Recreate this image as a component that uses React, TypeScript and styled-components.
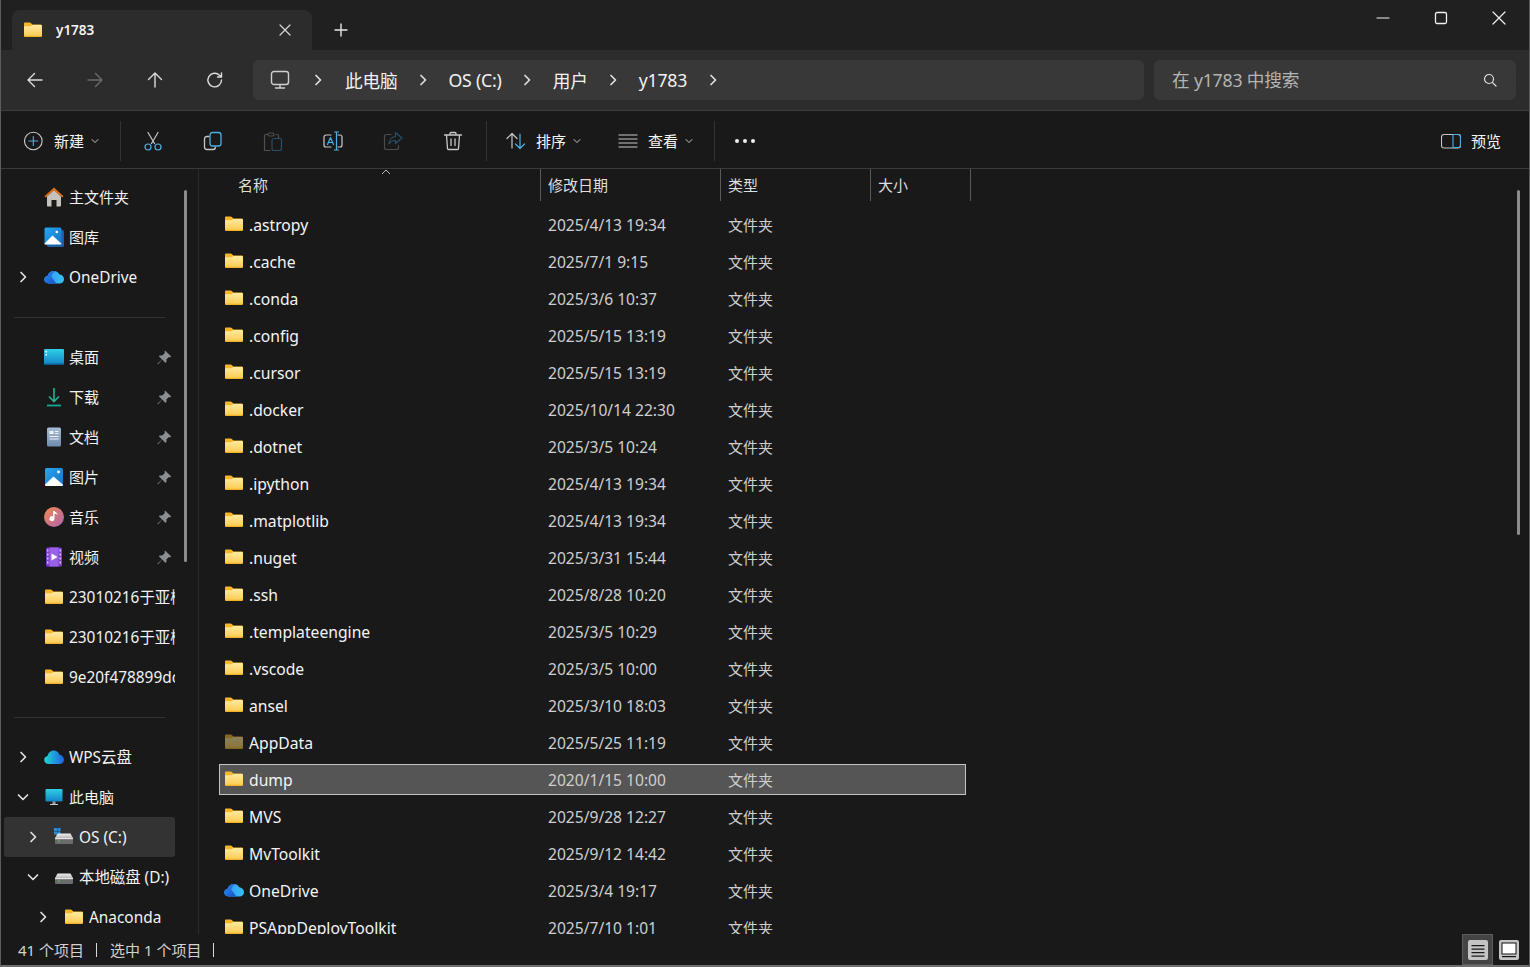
import React from "react";
import styled, { createGlobalStyle } from "styled-components";

const Global = createGlobalStyle`
  html, body { margin: 0; padding: 0; background: #191919; overflow: hidden; }
  * { box-sizing: border-box; }
`;

const FONT = `"Noto Sans", "Noto Sans CJK SC", sans-serif`;

const Win = styled.div`
  width: 1530px; height: 967px; display: flex; flex-direction: column;
  border-left: 1px solid #5c5c5c; border-right: 1px solid #5c5c5c; border-bottom: 2px solid #6e6e6e;
  font-family: ${FONT}; color: #fff; background: #191919; overflow: hidden;
`;
const TitleBar = styled.div`
  height: 50px; flex: none; background: #202020; display: flex; padding: 10px 0 0 11px;
`;
const Tab = styled.div`
  width: 300px; height: 40px; background: #2c2c2c; border-radius: 8px 8px 0 0;
  display: flex; align-items: center; padding: 0 21px 0 11px;
`;
const TabTitle = styled.span`
  font-size: 13.5px; font-weight: 600; margin-left: 13px; flex: 1; color: #f4f4f4;
`;
const NewTab = styled.div`
  width: 58px; height: 40px; display: flex; align-items: center; justify-content: center;
`;
const WinCtrls = styled.div`
  margin: -10px 1px 0 auto; display: flex; height: 36px;
`;
const WinBtn = styled.div<{ $w: number }>`
  width: ${p => p.$w}px; height: 36px; display: flex; align-items: center; justify-content: center;
`;
const NavBar = styled.div`
  height: 61px; flex: none; background: #2c2c2c; border-bottom: 1px solid #3c3c3c;
  display: flex; align-items: center; padding: 0 13px 1px 4px;
`;
const NavBtn = styled.div<{ $off?: boolean }>`
  width: 60px; height: 40px; display: flex; align-items: center; justify-content: center;
  color: ${p => (p.$off ? "#6a6a6a" : "#dcdcdc")};
`;
const Address = styled.div`
  flex: 1; height: 40px; margin-left: 8px; background: #383838; border-radius: 6px;
  display: flex; align-items: center; padding-left: 17px; gap: 19.5px;
  & > svg:first-child { margin-right: 2.5px; }
`;
const Crumb = styled.span`
  font-size: 17.7px; color: #f2f2f2; letter-spacing: -0.2px; white-space: nowrap;
  &:first-of-type { margin-left: 1.5px; }
`;
const Search = styled.div`
  width: 362px; height: 40px; margin-left: 10px; background: #383838; border-radius: 6px;
  display: flex; align-items: center; justify-content: space-between; padding: 0 19px 0 18px;
  font-size: 17.7px; color: #b4b4b4; letter-spacing: -0.2px;
`;
const SearchText = styled.span`
  position: relative; top: -1px;
`;
const Toolbar = styled.div`
  height: 58px; flex: none; background: #191919; border-bottom: 1px solid #3a3a3a;
  display: flex; align-items: center; padding: 3px 28px 0 11px;
`;
const TextBtn = styled.div<{ $w: number }>`
  width: ${p => p.$w}px; height: 40px; display: flex; align-items: center; padding-left: ${p => (p.$w > 110 ? 17 : 12)}px;
  font-size: 15px; color: #f6f6f6;
`;
const BtnLabel = styled.span`
  margin: 0 7px 0 10px; white-space: nowrap; position: relative; top: -1px;
`;
const Sep = styled.div<{ $l?: number }>`
  width: 1px; height: 40px; background: #333; margin: 0 2px 0 ${p => p.$l ?? 2}px;
`;
const IconBtn = styled.div`
  width: 60px; height: 40px; display: flex; align-items: center; justify-content: center;
`;
const DotsBtn = styled(IconBtn)`
  width: 56px;
`;
const Preview = styled.div`
  margin-left: auto; display: flex; align-items: center; gap: 10px; font-size: 15px; color: #f6f6f6;
`;
const PreviewLabel = styled.span`
  position: relative; top: -1px;
`;
const Body = styled.div`
  flex: 1; min-height: 0; display: flex;
`;
const Side = styled.div`
  width: 198px; flex: none; position: relative; overflow: hidden; padding-top: 8px;
  border-right: 1px solid #2a2a2a; padding-right: 23px; padding-left: 3px;
`;
const SideRow = styled.div<{ $level: number; $sel?: boolean }>`
  height: 40px; display: flex; align-items: center; border-radius: 3px;
  background: ${p => (p.$sel ? "#333333" : "transparent")};
  padding-left: ${p => p.$level * 10 + 11}px; position: relative;
`;
const Chev = styled.div`
  width: 16px; height: 16px; display: flex; align-items: center; justify-content: center; flex: none; color: #d0d0d0;
`;
const SideIcon = styled.div`
  width: 20px; height: 20px; margin-left: 13px; flex: none; display: flex; align-items: center; justify-content: center;
`;
const SideText = styled.span<{ $kind: "cjk" | "mixed" | "latin" }>`
  margin-left: 5px; font-size: ${p => (p.$kind === "cjk" ? 15 : 15.4)}px; color: #f2f2f2; white-space: nowrap; overflow: hidden;
  flex: 1; min-width: 0; padding-bottom: ${p => (p.$kind === "latin" ? 0 : 2)}px;
`;
const PinWrap = styled.div`
  position: absolute; right: 3px; top: 12px; width: 16px; height: 16px;
`;
const Divider = styled.div`
  height: 40px; display: flex; align-items: center; padding: 0 10px 0 10px;
  &::after { content: ""; height: 1px; flex: 1; background: #333; }
`;
const Thumb = styled.div<{ $h: number; $top: number; $right: number; $w: number }>`
  position: absolute; right: ${p => p.$right}px; top: ${p => p.$top}px; width: ${p => p.$w}px; height: ${p => p.$h}px;
  background: #8c8c8c; border-radius: 2px;
`;
const Main = styled.div`
  flex: 1; min-width: 0; position: relative; overflow: hidden; display: flex; flex-direction: column;
`;
const Header = styled.div`
  height: 32px; flex: none; display: flex; padding-left: 21px;
`;
const HeadCell = styled.div<{ $w: number; $first?: boolean }>`
  width: ${p => p.$w}px; font-size: 15px; color: #dedede; position: relative;
  display: flex; align-items: center;
  padding-left: ${p => (p.$first ? 18 : 7)}px; padding-bottom: 2px;
  border-right: 1px solid #5a5a5a;
`;
const SortMark = styled.svg`
  position: absolute; left: 161px; top: 0;
`;
const List = styled.div`
  flex: 1; min-height: 0; overflow: hidden; padding: 8px 0 0 20px;
`;
const FileRow = styled.div<{ $sel?: boolean }>`
  width: 747px; height: 31px; margin-bottom: 6px; display: flex; align-items: center;
  border: 1px solid ${p => (p.$sel ? "#c4c4c4" : "transparent")};
  background: ${p => (p.$sel ? "#555555" : "transparent")};
`;
const NameCell = styled.div`
  width: 320px; padding-left: 4px; display: flex; align-items: center; font-size: 15.7px; color: #f4f4f4; flex: none;
  & > svg { margin-top: -2px; }
`;
const NameText = styled.span`
  margin-left: 5px; white-space: nowrap;
`;
const DateCell = styled.div`
  width: 180px; padding-left: 8px; font-size: 15.6px; color: #cfcfcf; flex: none; white-space: nowrap;
`;
const TypeCell = styled.div`
  padding-left: 8px; font-size: 15px; color: #cfcfcf; white-space: nowrap;
`;
const Status = styled.div`
  height: 31px; flex: none; display: flex; align-items: center; padding-left: 17px;
  font-size: 15px; color: #d2d2d2; background: #191919;
`;
const StatusSep = styled.span`
  width: 1px; height: 14px; background: #d8d8d8; margin: 0 13px 0 12px;
`;
const ViewGroup = styled.div`
  margin-left: auto; display: flex; height: 31px; padding-right: 5px; align-items: center;
`;
const ViewBtn = styled.div<{ $on?: boolean }>`
  width: 31px; height: 31px; display: flex; align-items: center; justify-content: center;
  background: ${p => (p.$on ? "#444" : "transparent")};
  border: 1px solid ${p => (p.$on ? "#5c5c5c" : "transparent")};
`;
const HiddenDefs = styled.svg`
  position: absolute; width: 0; height: 0;
`;

const Defs = () => (
  <HiddenDefs aria-hidden="true">
    <defs>
      <linearGradient id="fold" x1="0" y1="0" x2="0" y2="1"><stop offset="0" stopColor="#ffeaa0" /><stop offset="1" stopColor="#fcca50" /></linearGradient>
      <linearGradient id="cloud" x1="0" y1="0" x2="1" y2="1"><stop offset="0" stopColor="#2a8cf0" /><stop offset="1" stopColor="#1454c8" /></linearGradient>
      <linearGradient id="cloud2" x1="0" y1="0" x2="1" y2="0"><stop offset="0" stopColor="#3d8ff5" /><stop offset="1" stopColor="#32c3f5" /></linearGradient>
      <linearGradient id="wps" x1="0" y1="0" x2="1" y2="0"><stop offset="0" stopColor="#22d6d0" /><stop offset="1" stopColor="#1d63e6" /></linearGradient>
      <linearGradient id="pic" x1="0" y1="0" x2="1" y2="1"><stop offset="0" stopColor="#29a6ee" /><stop offset="1" stopColor="#1272c8" /></linearGradient>
      <linearGradient id="desk" x1="0" y1="0" x2="0" y2="1"><stop offset="0" stopColor="#30d0e6" /><stop offset="1" stopColor="#1384c8" /></linearGradient>
      <linearGradient id="music" x1="0" y1="0" x2="1" y2="1"><stop offset="0" stopColor="#f08a4a" /><stop offset="1" stopColor="#b062b4" /></linearGradient>
      <linearGradient id="doc" x1="0" y1="0" x2="0" y2="1"><stop offset="0" stopColor="#a8bdd6" /><stop offset="1" stopColor="#6f8cab" /></linearGradient>
      <linearGradient id="drive" x1="0" y1="0" x2="0" y2="1"><stop offset="0" stopColor="#f0f0f0" /><stop offset="1" stopColor="#b8b8b8" /></linearGradient>
    </defs>
  </HiddenDefs>
);

const Folder = ({ dim }: { dim?: boolean }) => (
  <svg width="20" height="16" viewBox="0 0 20 16" opacity={dim ? 0.5 : 1}>
    <path d="M1 1.500C1 .9 1.500.5 2 .5h4.600c.5 0 .9.2 1.200.5L9.400 2.500H17.600c.8 0 1.400.6 1.400 1.400V6H1z" fill="#f6b62a" />
    <path d="M1 13.500V5c0-.4.3-.8.800-.8h5.400c.4 0 .8-.1 1.100-.4L9.600 3h8c.8 0 1.400.6 1.400 1.400v9.100c0 .8-.6 1.400-1.400 1.400H2.400C1.600 14.900 1 14.300 1 13.500z" fill="url(#fold)" />
    <path d="M1 13.800h18c0 .7-.6 1.200-1.400 1.200H2.400c-.8 0-1.400-.5-1.400-1.200z" fill="#f0b32a" />
  </svg>
);
const OneDriveIcon = () => (
  <svg width="20" height="14" viewBox="0 0 20 14">
    <path d="M4.500 13.500C2 13.500.2 11.800.2 9.600c0-2 1.500-3.600 3.400-3.800C4.500 3 7 1 9.800 1c2.300 0 4.300 1.200 5.400 3.200C17.800 4.500 20 6.500 20 9.200c0 2.400-1.900 4.300-4.300 4.300z" fill="url(#cloud2)" />
    <path d="M4.500 13.500C2 13.500.2 11.800.2 9.600c0-2 1.500-3.600 3.400-3.800C4.500 3 7 1 9.800 1l1.500.3c-2 1-3.500 3-4 5.200l5 7z" fill="url(#cloud)" />
  </svg>
);
const WpsIcon = () => (
  <svg width="20" height="16" viewBox="0 0 20 16">
    <path d="M4.500 15C2 15 .2 13.200.2 11c0-2 1.400-3.600 3.300-3.900C4 4 6.500 1.500 9.800 1.500c2.700 0 5 1.800 5.700 4.300C18 6.200 20 8.200 20 10.700c0 2.400-1.900 4.300-4.300 4.300z" fill="url(#wps)" />
  </svg>
);
const HomeIcon = () => (
  <svg width="20" height="20" viewBox="0 0 20 20">
    <path d="M3 9.500 10 3l7 6.500V18.500c0 .6-.4 1-1 1h-3.500v-6.500h-5v6.500H4c-.6 0-1-.4-1-1z" fill="#c6c2bd" />
    <path d="M10 .5 0.500 9.300l1.200 1.300L10 3l8.300 7.600 1.200-1.300z" fill="#e8720f" />
  </svg>
);
const GalleryIcon = () => (
  <svg width="20" height="20" viewBox="0 0 20 20">
    <rect x="3" y="3" width="17" height="17" rx="1.500" fill="#1b5fa8" />
    <rect x="0.500" y="0.500" width="17" height="17" rx="1.500" fill="url(#pic)" />
    <path d="M0.500 16.500 8.500 8.500l9 8.200v.3c0 .3-.2.500-.5.500H1c-.3 0-.5-.2-.5-.5z" fill="#fff" />
    <circle cx="12.800" cy="5" r="1.300" fill="#fff" />
  </svg>
);
const PicIcon = () => (
  <svg width="20" height="20" viewBox="0 0 20 20">
    <rect x="1" y="1" width="18" height="18" rx="1.500" fill="url(#pic)" />
    <path d="M1 17.500 9.500 9.500l9.500 8.200c0 .8-.4 1.300-1.200 1.300H2.200C1.400 19 1 18.400 1 17.500z" fill="#fff" />
    <circle cx="14.500" cy="5" r="1.400" fill="#fff" />
  </svg>
);
const DesktopIcon = () => (
  <svg width="20" height="16" viewBox="0 0 20 16">
    <rect x="0" y="0" width="20" height="15.500" rx="1" fill="url(#desk)" />
    <rect x="1.500" y="2" width="1.500" height="1.500" fill="#fff" />
    <rect x="1.500" y="5" width="1.500" height="1.500" fill="#fff" />
    <rect x="0" y="14.500" width="20" height="1.200" fill="#0c5f9c" />
  </svg>
);
const DownloadIcon = () => (
  <svg width="20" height="20" viewBox="0 0 20 20" fill="none">
    <path d="M10 1v13M5 9.500l5 5 5-5" stroke="#2bb08f" strokeWidth="1.600" />
    <path d="M3 18.500h14" stroke="#14a89a" strokeWidth="1.800" />
  </svg>
);
const DocIcon = () => (
  <svg width="20" height="20" viewBox="0 0 20 20">
    <rect x="3" y="0.500" width="14" height="19" rx="1.500" fill="url(#doc)" />
    <path d="M5.500 4h4v3h-4zM11 4h3.500v1H11zM11 6h3.500v1H11zM5.500 9h9v1h-9zM5.500 11.500h9v1h-9z" fill="#eef3f8" />
  </svg>
);
const MusicIcon = () => (
  <svg width="20" height="20" viewBox="0 0 20 20">
    <circle cx="10" cy="10" r="10" fill="url(#music)" />
    <path d="M10.500 4v7.600a2.500 2.500 0 1 1-1.400-2.200V4z M10.500 4c1 1.800 3 1.800 3.300 4-1.200-1-2.300-1.200-3.300-1.200z" fill="#fff" />
  </svg>
);
const VideoIcon = () => (
  <svg width="20" height="20" viewBox="0 0 20 20">
    <rect x="2" y="0.500" width="16" height="19" rx="1.500" fill="#7d3ed0" />
    <rect x="5.500" y="0.500" width="9" height="19" fill="#9a62e6" />
    <path d="M7.500 6.500v7l6-3.500z" fill="#fff" />
    <path d="M3 2.500h1.500v2H3zM3 6.500h1.500v2H3zM3 10.500h1.500v2H3zM3 14.500h1.500v2H3zM15.500 2.500H17v2h-1.500zM15.500 6.500H17v2h-1.500zM15.500 10.500H17v2h-1.500zM15.500 14.500H17v2h-1.500z" fill="#d8c2f6" />
  </svg>
);
const PcIcon = () => (
  <svg width="20" height="20" viewBox="0 0 20 20">
    <rect x="1.500" y="2" width="17" height="12.500" rx="1" fill="url(#desk)" />
    <rect x="8.500" y="14.500" width="3" height="2.500" fill="#9aa3ab" />
    <rect x="6" y="17" width="8" height="1" fill="#c4cad0" />
  </svg>
);
const DriveIcon = ({ win }: { win?: boolean }) => (
  <svg width="20" height="20" viewBox="0 0 20 20">
    {win && <path d="M0 1h3v3H0zM3.500 1h3v3h-3zM0 4.500h3v3H0zM3.500 4.500h3v3h-3z" fill="#1e90e6" />}
    <path d="M3.500 6.500h13L19 11H1z" fill="url(#drive)" />
    <rect x="1" y="11" width="18" height="6" rx="1" fill="#6b6b6b" />
    <rect x="1" y="11" width="18" height="1.200" fill="#e4e4e4" />
    <rect x="4" y="13.500" width="1.500" height="1.500" fill="#34d058" />
  </svg>
);
const Pin = () => (
  <svg width="16" height="16" viewBox="0 0 16 16" fill="#8a8f94">
    <path d="M9.800 1.200 15 6.300c.3.300.1.800-.3.800-.6.100-1.200 0-1.700-.2l-2.700 2.700c.3 1 .3 2.100-.2 3-.2.300-.6.300-.8.100L6.200 9.600 2 14.300 1.400 13.700l4.600-4.200L3.100 6.600c-.2-.2-.2-.6.100-.8.900-.5 2-.5 3-.2l2.700-2.700c-.2-.5-.3-1.100-.2-1.700 0-.4.500-.6.800-.2z" />
  </svg>
);

const SvgLine = ({ children, w = 20, h = 20, vb, sw = 1.4, c = "currentColor" }: { children: React.ReactNode; w?: number; h?: number; vb?: string; sw?: number; c?: string }) => (
  <svg width={w} height={h} viewBox={vb ?? `0 0 ${w} ${h}`} fill="none" stroke={c} strokeWidth={sw} strokeLinecap="round" strokeLinejoin="round">{children}</svg>
);
const ChevR = ({ size = 12, c = "#e0e0e0" }: { size?: number; c?: string }) => (
  <SvgLine w={size} h={size} vb="0 0 12 12" sw={1.7} c={c}><path d="M4 1.500 8.500 6 4 10.500" /></SvgLine>
);
const ChevD = ({ c = "#e0e0e0" }: { c?: string }) => (
  <SvgLine w={12} h={12} sw={1.7} c={c}><path d="M1.500 4 6 8.500 10.500 4" /></SvgLine>
);
const SmallChev = () => (
  <SvgLine w={8} h={8} sw={1} c="#c8c8c8"><path d="M1 2.500 4 5.500 7 2.500" /></SvgLine>
);
const BLUE = "#4cb0e8";
const GR = "#c8c8c8";

const sideKind = (t: string): "cjk" | "mixed" | "latin" =>
  /^[\x00-\x7f]+$/.test(t) ? "latin" : /^[^\x00-\x7f]+$/.test(t) ? "cjk" : "mixed";

const sideItems: Array<
  | { d: true }
  | { t: string; level: number; icon: React.ReactNode; chev?: "r" | "d"; pin?: boolean; sel?: boolean }
> = [
  { t: "主文件夹", level: 0, icon: <HomeIcon /> },
  { t: "图库", level: 0, icon: <GalleryIcon /> },
  { t: "OneDrive", level: 0, icon: <OneDriveIcon />, chev: "r" },
  { d: true },
  { t: "桌面", level: 0, icon: <DesktopIcon />, pin: true },
  { t: "下载", level: 0, icon: <DownloadIcon />, pin: true },
  { t: "文档", level: 0, icon: <DocIcon />, pin: true },
  { t: "图片", level: 0, icon: <PicIcon />, pin: true },
  { t: "音乐", level: 0, icon: <MusicIcon />, pin: true },
  { t: "视频", level: 0, icon: <VideoIcon />, pin: true },
  { t: "23010216于亚楠", level: 0, icon: <Folder /> },
  { t: "23010216于亚楠", level: 0, icon: <Folder /> },
  { t: "9e20f478899dc29eb19741386f9343c8", level: 0, icon: <Folder /> },
  { d: true },
  { t: "WPS云盘", level: 0, icon: <WpsIcon />, chev: "r" },
  { t: "此电脑", level: 0, icon: <PcIcon />, chev: "d" },
  { t: "OS (C:)", level: 1, icon: <DriveIcon win />, chev: "r", sel: true },
  { t: "本地磁盘 (D:)", level: 1, icon: <DriveIcon />, chev: "d" },
  { t: "Anaconda", level: 2, icon: <Folder />, chev: "r" },
];

const files: Array<[string, string, ("dim" | "od")?]> = [
  [".astropy", "2025/4/13 19:34"],
  [".cache", "2025/7/1 9:15"],
  [".conda", "2025/3/6 10:37"],
  [".config", "2025/5/15 13:19"],
  [".cursor", "2025/5/15 13:19"],
  [".docker", "2025/10/14 22:30"],
  [".dotnet", "2025/3/5 10:24"],
  [".ipython", "2025/4/13 19:34"],
  [".matplotlib", "2025/4/13 19:34"],
  [".nuget", "2025/3/31 15:44"],
  [".ssh", "2025/8/28 10:20"],
  [".templateengine", "2025/3/5 10:29"],
  [".vscode", "2025/3/5 10:00"],
  ["ansel", "2025/3/10 18:03"],
  ["AppData", "2025/5/25 11:19", "dim"],
  ["dump", "2020/1/15 10:00"],
  ["MVS", "2025/9/28 12:27"],
  ["MvToolkit", "2025/9/12 14:42"],
  ["OneDrive", "2025/3/4 19:17", "od"],
  ["PSAppDeployToolkit", "2025/7/10 1:01"],
];

export default function App() {
  return (
    <Win>
      <Global />
      <Defs />
      <TitleBar>
        <Tab>
          <Folder />
          <TabTitle>y1783</TabTitle>
          <SvgLine w={12} h={12} sw={1.2} c="#d8d8d8"><path d="M1 1l10 10M11 1 1 11" /></SvgLine>
        </Tab>
        <NewTab>
          <SvgLine w={14} h={14} sw={1.4} c="#e8e8e8"><path d="M7 1v12M1 7h12" /></SvgLine>
        </NewTab>
        <WinCtrls>
          <WinBtn $w={57}><SvgLine w={14} h={14} sw={1.2} c="#f0f0f0"><path d="M1 7h12" /></SvgLine></WinBtn>
          <WinBtn $w={59}><SvgLine w={14} h={14} sw={1.3} c="#f0f0f0"><rect x="1.500" y="1.500" width="11" height="11" rx="1.500" /></SvgLine></WinBtn>
          <WinBtn $w={58}><SvgLine w={14} h={14} sw={1.2} c="#f0f0f0"><path d="M1 1l12 12M13 1 1 13" /></SvgLine></WinBtn>
        </WinCtrls>
      </TitleBar>
      <NavBar>
        <NavBtn><SvgLine sw={1.4}><path d="M17 10H3M9.500 3.500 3 10l6.500 6.500" /></SvgLine></NavBtn>
        <NavBtn $off><SvgLine sw={1.4}><path d="M3 10h14M10.500 3.500 17 10l-6.500 6.500" /></SvgLine></NavBtn>
        <NavBtn><SvgLine sw={1.4}><path d="M10 17V3M3.500 9.500 10 3l6.500 6.500" /></SvgLine></NavBtn>
        <NavBtn><SvgLine sw={1.4}><path d="M16.500 10a6.800 6.800 0 1 1-2-4.800L16.500 7M16.500 3v4h-4" /></SvgLine></NavBtn>
        <Address>
          <SvgLine sw={1.4} c="#cfcfcf"><rect x="1.500" y="1.500" width="17" height="13" rx="2.500" /><path d="M10 15v2.500M5.500 18h9" /></SvgLine>
          <ChevR />
          <Crumb>此电脑</Crumb>
          <ChevR />
          <Crumb>OS (C:)</Crumb>
          <ChevR />
          <Crumb>用户</Crumb>
          <ChevR />
          <Crumb>y1783</Crumb>
          <ChevR />
        </Address>
        <Search>
          <SearchText>在 y1783 中搜索</SearchText>
          <SvgLine w={14} h={14} sw={1.2} c="#e0e0e0"><circle cx="6" cy="6" r="4.500" /><path d="M9.300 9.300 13 13" /></SvgLine>
        </Search>
      </NavBar>
      <Toolbar>
        <TextBtn $w={106}>
          <SvgLine c={GR} sw={1.1}><circle cx="9.300" cy="10" r="8.800" /><path d="M9.300 5.500v9M4.800 10h9" stroke={BLUE} /></SvgLine>
          <BtnLabel>新建</BtnLabel>
          <SmallChev />
        </TextBtn>
        <Sep />
        <IconBtn>
          <SvgLine sw={1.2}><path d="M5 1.500 11.500 12.500M15 1.500 8.500 12.500" stroke={GR} /><circle cx="5" cy="16" r="3" stroke={BLUE} /><circle cx="15" cy="16" r="3" stroke={BLUE} /></SvgLine>
        </IconBtn>
        <IconBtn>
          <SvgLine sw={1.3}><path d="M6 5.500H3.500A2.500 2.500 0 0 0 1.500 8v8A2.500 2.500 0 0 0 4 18.500h6a2.500 2.500 0 0 0 2.500-2" stroke={GR} /><rect x="7" y="1.500" width="11" height="13.500" rx="2.500" stroke={BLUE} /></SvgLine>
        </IconBtn>
        <IconBtn>
          <SvgLine sw={1.2}><path d="M4 3.500H2.500A1.500 1.500 0 0 0 1.500 5v13.500c0 .5.500 1 1 1H7M13 3.500h1c1 0 1.500.5 1.500 1.500v1.500M5 3.500c0-1 .5-1.500 1.500-1.500h3c1 0 1.500.5 1.500 1.500S10.500 5 9.500 5h-3C5.500 5 5 4.500 5 3.500z" stroke="#505050" /><rect x="9" y="7.500" width="9.500" height="12" rx="2" stroke="#2a4f66" /></SvgLine>
        </IconBtn>
        <IconBtn>
          <SvgLine sw={1.2}><path d="M8 4H3a2 2 0 0 0-2 2v8a2 2 0 0 0 2 2h5M15 4h2a2 2 0 0 1 2 2v8a2 2 0 0 1-2 2h-2" stroke={GR} /><path d="M4.500 13.500 7.500 6.500l3 7M5.500 11.500h4M11.500 1h4M11.500 19h4M13.500 1v18" stroke={BLUE} /></SvgLine>
        </IconBtn>
        <IconBtn>
          <SvgLine sw={1.2}><path d="M8 3.500H3.500a2 2 0 0 0-2 2v11a2 2 0 0 0 2 2h10a2 2 0 0 0 2-2v-2" stroke="#4c4c4c" /><path d="M12.500 1.500 19 7l-6.500 5.500V9.500c-3 0-5 1-6.500 3.500.3-4 2.800-7 6.500-7.500z" stroke="#2a4f66" /></SvgLine>
        </IconBtn>
        <IconBtn>
          <SvgLine sw={1.3} c={GR}><path d="M1.500 4h17M7 4V2.500c0-.5.500-1 1-1h4c.5 0 1 .5 1 1V4M3.500 4l1 13.500c0 .6.500 1 1 1h9c.5 0 1-.4 1-1l1-13.500M8 8v6.500M12 8v6.500" /></SvgLine>
        </IconBtn>
        <Sep $l={3} />
        <TextBtn $w={112}>
          <SvgLine sw={1.2}><path d="M6 17V2.500M1 7.500l5-5 5 5" stroke={GR} /><path d="M14 3v14.500M9.500 13l4.500 4.500 4.500-4.500" stroke={BLUE} /></SvgLine>
          <BtnLabel>排序</BtnLabel>
          <SmallChev />
        </TextBtn>
        <TextBtn $w={111}>
          <SvgLine sw={1.2} c={GR}><path d="M.5 4h19M.5 8h19M.5 12h19M.5 16h19" strokeLinecap="butt" /></SvgLine>
          <BtnLabel>查看</BtnLabel>
          <SmallChev />
        </TextBtn>
        <Sep />
        <DotsBtn>
          <svg width="22" height="6" viewBox="0 0 22 6" fill="#f0f0f0"><circle cx="3" cy="3" r="2" /><circle cx="11" cy="3" r="2" /><circle cx="19" cy="3" r="2" /></svg>
        </DotsBtn>
        <Preview>
          <SvgLine sw={1.1}><rect x=".5" y="3.500" width="19" height="13.500" rx="2.500" stroke={GR} /><path d="M12 3.500h5.500a2 2 0 0 1 2 2v9a2 2 0 0 1-2 2H12z" stroke={BLUE} /></SvgLine>
          <PreviewLabel>预览</PreviewLabel>
        </Preview>
      </Toolbar>
      <Body>
        <Side>
          {sideItems.map((it, i) =>
            "d" in it ? (
              <Divider key={i} />
            ) : (
              <SideRow key={i} $level={it.level} $sel={it.sel}>
                <Chev>{it.chev === "r" ? <ChevR /> : it.chev === "d" ? <ChevD /> : null}</Chev>
                <SideIcon>{it.icon}</SideIcon>
                <SideText $kind={sideKind(it.t)}>{it.t}</SideText>
                {it.pin && <PinWrap><Pin /></PinWrap>}
              </SideRow>
            )
          )}
          <Thumb $top={21} $h={372} $right={11} $w={3} />
        </Side>
        <Main>
          <Header>
            <HeadCell $w={321} $first>
              名称
              <SortMark width="10" height="6" viewBox="0 0 10 6" fill="none" stroke="#bdbdbd" strokeWidth="1"><path d="M1 5 5 1l4 4" /></SortMark>
            </HeadCell>
            <HeadCell $w={180}>修改日期</HeadCell>
            <HeadCell $w={150}>类型</HeadCell>
            <HeadCell $w={100}>大小</HeadCell>
          </Header>
          <List>
            {files.map(([n, d, k]) => (
              <FileRow key={n} $sel={n === "dump"}>
                <NameCell>
                  {k === "od" ? <OneDriveIcon /> : <Folder dim={k === "dim"} />}
                  <NameText>{n}</NameText>
                </NameCell>
                <DateCell>{d}</DateCell>
                <TypeCell>文件夹</TypeCell>
              </FileRow>
            ))}
          </List>
          <Thumb $top={21} $h={345} $right={9} $w={3} />
        </Main>
      </Body>
      <Status>
        41 个项目
        <StatusSep />
        选中 1 个项目
        <StatusSep />
        <ViewGroup>
          <ViewBtn $on>
            <svg width="20" height="20" viewBox="0 0 20 20"><rect width="20" height="20" rx="2" fill="#c4c4c4" /><path d="M3.500 5h13v1.300h-13zM3.500 8.500h13v1.300h-13zM3.500 12h13v1.300h-13zM3.500 15.500h13v1.300h-13z" fill="#1a1a1a" /></svg>
          </ViewBtn>
          <ViewBtn>
            <svg width="20" height="20" viewBox="0 0 20 20"><rect width="20" height="20" rx="2" fill="#c4c4c4" /><rect x="3" y="3" width="14" height="11" fill="#fff" stroke="#111" strokeWidth="1" /><path d="M3 16h14v1.200H3z" fill="#111" /></svg>
          </ViewBtn>
        </ViewGroup>
      </Status>
    </Win>
  );
}
